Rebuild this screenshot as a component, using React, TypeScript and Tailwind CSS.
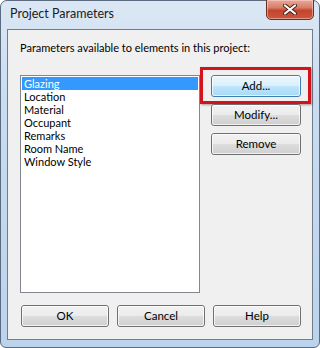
import React from "react"

const items = ["Glazing", "Location", "Material", "Occupant", "Remarks", "Room Name", "Window Style"]

function WinButton({ label, hot = false, className = "" }: { label: string; hot?: boolean; className?: string }) {
  return (
    <div
      className={
        "relative h-[22px] rounded-[3px] border flex items-center justify-center text-[11.5px] text-black " +
        (hot
          ? "border-[#3c7fb1] bg-[linear-gradient(#eaf6fd_0%,#d9f0fc_50%,#bee6fd_51%,#a7d9f5_100%)] "
          : "border-[#707070] bg-[linear-gradient(#f2f2f2_0%,#ebebeb_50%,#dddddd_51%,#cfcfcf_100%)] ") +
        className
      }
    >
      <div className="absolute inset-0 rounded-[2px] border border-white/70" />
      <span className="relative leading-none">{label}</span>
    </div>
  )
}

export default function App() {
  return (
    <div className="w-[320px] h-[348px] bg-white overflow-hidden font-['Lato','Noto_Sans',sans-serif]">
      {/* window frame */}
      <div className="relative w-full h-full flex flex-col rounded-t-[7px] rounded-b-[6px] border border-[#5a6b80] bg-[linear-gradient(#dbe7f4,#c9dcf0_30%,#bcd3ec)] pl-[6px] pr-[6px] pb-[7px]">
        {/* title bar */}
        <div className="h-[28px] flex items-center pl-[3px] pb-[2px] text-[12.5px] text-[#1b1b1b]">
          Project Parameters
        </div>
        <div className="absolute top-[-2px] right-[5px] w-[48px] h-[21px] rounded-b-[5px] border border-[#6b2e25] bg-[linear-gradient(#e9a898_0%,#d77e6a_40%,#c4452c_55%,#c9573c_100%)] shadow-[inset_0_0_0_1px_rgba(255,220,210,0.5)] flex items-center justify-center">
          <svg width="14" height="11" viewBox="0 0 14 11">
            <path d="M2 1.5 L12 9.5 M12 1.5 L2 9.5" stroke="#4a1d16" strokeWidth="4" strokeLinecap="round" />
            <path d="M2 1.5 L12 9.5 M12 1.5 L2 9.5" stroke="#ffffff" strokeWidth="2.2" strokeLinecap="round" />
          </svg>
        </div>

        {/* client area */}
        <div className="flex-1 flex flex-col border border-[#6f7d8c] bg-[#f0f0f0] pl-[12px] pr-[11px] pt-[10px] pb-[12px] text-[11px]">
          <div className="h-[15px] leading-[15px] text-black">
            Parameters available to elements in this project:
          </div>
          <div className="flex-1 mt-[20px] flex gap-[11px]">
            <div className="w-[180px] border border-[#828790] bg-white p-[1px] text-black">
              {items.map((it, i) => (
                <div
                  key={it}
                  className={"h-[13px] leading-[13px] pl-[2px] " + (i === 0 ? "bg-[#3399ff] text-white" : "")}
                >
                  {it}
                </div>
              ))}
            </div>
            <div className="w-[90px] flex flex-col gap-[7px]">
              <div className="relative">
                <WinButton label="Add..." hot />
                <div className="absolute left-[-11px] right-[-10px] top-[-8px] bottom-[-7px] border-[3px] border-[#d4121c] shadow-[1px_1px_2px_rgba(0,0,0,0.35)]" />
              </div>
              <WinButton label="Modify..." />
              <WinButton label="Remove" />
            </div>
          </div>
          <div className="mt-[12px] flex gap-[8px] pl-[1px]">
            <WinButton label="OK" className="w-[88px]" />
            <WinButton label="Cancel" className="w-[88px]" />
            <WinButton label="Help" className="w-[88px]" />
          </div>
        </div>
      </div>
    </div>
  )
}
